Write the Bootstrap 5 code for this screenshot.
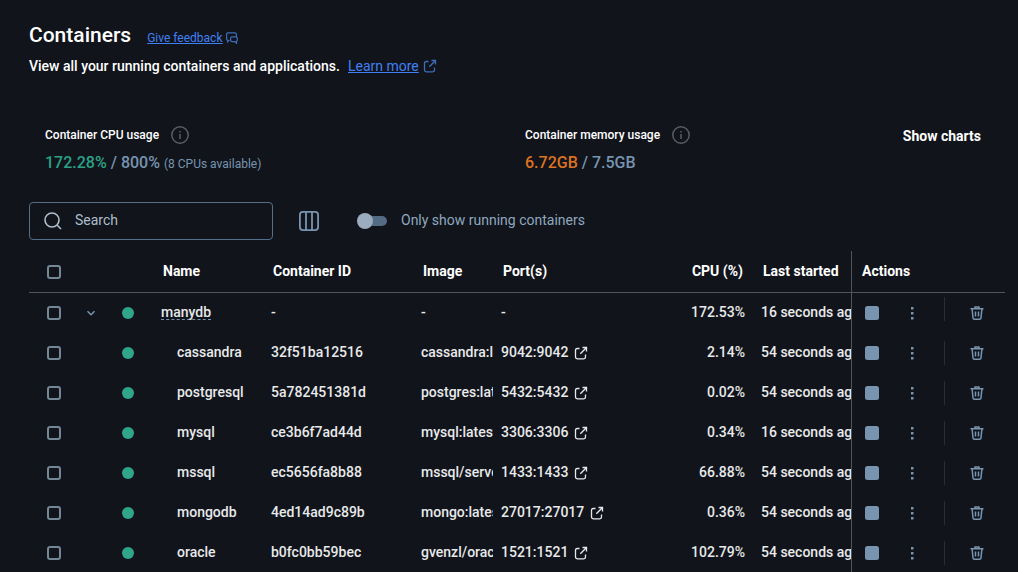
<!DOCTYPE html>
<html lang="en" data-bs-theme="dark">
<head>
<meta charset="utf-8">
<meta name="viewport" content="width=device-width, initial-scale=1">
<title>Containers</title>
<link href="https://cdn.jsdelivr.net/npm/bootstrap@5.3.0/dist/css/bootstrap.min.css" rel="stylesheet">
<style>
  :root { --page: #11141b; --steel: #7794b0; --line: #515557; --link: #4080f5; --green: #2aa287; }
  body { background: var(--page); color: #fff; font: 400 14px/20px Roboto, sans-serif; }
  svg { display: block; fill: none; stroke: currentColor; flex: none; }
  .page-body { padding: 23px 13px 0 29px; }
  .page-title { font-size: 21px; line-height: 24px; font-weight: 500; }
  .link-blue { color: var(--link); font-weight: 400; }
  .link-blue svg { color: #3e6db8; }
  .feedback { padding-top: 6px; }
  .intro { margin-top: 9px; font-weight: 500; }
  .fs-small { font-size: 12px; line-height: 16px; }
  .fs-stat { font-size: 16px; line-height: 24px; font-weight: 500; }
  .stats { margin-top: 50px; padding-left: 16px; }
  .info { color: #5a5d60; }
  .steel { color: var(--steel); }
  .usage-ok { color: var(--green); }
  .usage-high { color: #dd7320; }
  .stat-label { font-weight: 500; gap: 12px; }
  .stat-value { margin-top: 7px; }
  .show-charts { color: #fff; font-size: 14px; line-height: 20px; font-weight: 700; padding: 0 24px; }
  .toolbar { margin-top: 27px; }
  .search-box { width: 244px; height: 38px; border: 1px solid #556e87; border-radius: 4px; padding: 0 14px; color: #adbecb; }
  .search-box input, .search-box input:focus { background: none; border: 0; box-shadow: none; color: inherit; font-size: 14px; line-height: 20px; padding: 0 0 2px 13px; }
  .search-box input::placeholder { color: #adbecb; opacity: 1; }
  .btn-columns { margin-left: 24px; }
  .running { margin-left: 36px; gap: 14px; color: #8fa8bf; }
  .running label { padding-bottom: 2px; }
  .toggle { appearance: none; width: 30px; height: 16px; display: grid; align-items: center; }
  .toggle::before, .toggle::after { content: ""; grid-area: 1 / 1; }
  .toggle::before { height: 10px; margin-left: 4px; border-radius: 5px; background: #546b84; }
  .toggle::after { width: 16px; height: 16px; border-radius: 50%; background: #9bacbf; }
  .grid { table-layout: fixed; width: 100%; margin-top: 11px; border-collapse: separate; border-spacing: 0; }
  .grid th { height: 42px; padding: 0 0 2px 10px; font-weight: 700; border-bottom: 1px solid var(--line); white-space: nowrap; }
  .grid td { height: 40px; padding: 0 0 2px 8px; font-weight: 500; color: #e8e9ea; overflow: hidden; white-space: nowrap; }
  .grid .cpu { text-align: right; padding-right: 8px; }
  .grid th.cpu { padding-right: 10px; }
  .grid .pick { padding: 0 0 0 18px; }
  .grid .icon-cell { padding: 0; }
  .grid .actions { border-left: 1px solid var(--line); }
  .grid td.actions { padding: 0; }
  .w-pick { width: 50px; } .w-expand { width: 24px; } .w-status { width: 50px; } .w-name { width: 110px; }
  .w-id { width: 150px; } .w-image { width: 80px; } .w-cpu { width: 140px; } .w-started { width: 98px; } .w-actions { width: 154px; }
  .tick { appearance: none; display: block; width: 14px; height: 14px; margin: 0; border: 2px solid #748797; border-radius: 3px; }
  .tick:checked { background: #748797; }
  .dot { width: 12px; height: 12px; border-radius: 50%; background: #2fa58a; }
  .app-name { color: inherit; text-decoration: none; border-bottom: 1px dashed #7794b0; display: inline-block; line-height: 14px; }
  .child-name { padding-left: 16px; }
  .port { gap: 6px; }
  .port a { padding-top: 2px; }
  .action-bar { height: 32px; padding: 0 21px 0 12px; }
  .btn-icon { border: 0; padding: 0; background: none; color: var(--steel); }
  .btn-more { margin-left: 24px; }
  .divider { width: 1px; height: 24px; margin-left: 24px; background: #2a2d33; }
  .app-row .divider { align-self: flex-start; }
</style>
</head>
<body>
<svg width="0" height="0" class="position-absolute" aria-hidden="true">
  <symbol id="external" viewBox="0 0 14 14"><path d="M5.500 2.500H3.300Q1.500 2.500 1.500 4.300v6.700q0 1.800 1.800 1.800H9.700q1.800 0 1.800-1.800V8.500M8.500 1.500h4v4M12.300 1.700 6.300 7.700" stroke-width="1.300"/></symbol>
  <symbol id="info" viewBox="0 0 18 18"><circle cx="9" cy="9" r="8.2" stroke-width="1.5"/><path d="M9 8v5M9 5v1.6" stroke-width="1.5"/></symbol>
  <symbol id="trash" viewBox="0 0 14 14"><path d="M.5 2.7h13M5 2.4V.9h4v1.5M2.1 3l.9 8.8q.2 1.4 1.4 1.4h5.2q1.2 0 1.4-1.4l.9-8.8M5.5 5.5v5M8.5 5.5v5" stroke-width="1.5"/></symbol>
  <symbol id="more" viewBox="0 0 16 16"><path d="M7 2h2.500v2.500H7zM7 7h2.500v2.500H7zM7 12h2.500v2.500H7z" fill="currentColor" stroke="none"/></symbol>
</svg>
<main class="page-body vh-100 overflow-hidden">
  <header>
    <div class="d-flex align-items-center gap-3">
      <h1 class="page-title mb-0">Containers</h1>
      <a href="#" class="feedback link-blue fs-small d-flex align-items-center gap-1 text-decoration-none"><span class="text-decoration-underline">Give feedback</span>
        <svg width="12" height="12" viewBox="0 0 12 12" stroke-width="1.2"><path d="M3.600 8.400H3L1.700 9.800V8.400Q.6 8 .6 7V2.400Q.6.8 2.200.8h6.600q1.600 0 1.600 1.600v2M6 4.800h3.800q1.500 0 1.500 1.500V8q0 1-.8 1.400v1.800L8.800 9.600H6.200Q4.600 9.600 4.600 8V6.200Q4.600 4.800 6 4.800Z"/></svg></a>
    </div>
    <p class="intro mb-0 d-flex align-items-center gap-2"><span>View all your running containers and applications.</span>
      <a href="#" class="link-blue d-flex align-items-center gap-1 text-decoration-none"><span class="text-decoration-underline">Learn more</span><svg width="14" height="14"><use href="#external"/></svg></a></p>
  </header>

  <section class="stats row g-0">
    <div class="col-6">
      <div class="stat-label d-flex align-items-center fs-small">Container CPU usage <svg class="info" width="18" height="18"><use href="#info"/></svg></div>
      <div class="stat-value fs-stat steel"><span class="usage-ok">172.28%</span> / 800% <span class="fs-small fw-normal">(8 CPUs available)</span></div>
    </div>
    <div class="col-6 d-flex justify-content-between align-items-start">
      <div>
        <div class="stat-label d-flex align-items-center fs-small">Container memory usage <svg class="info" width="18" height="18"><use href="#info"/></svg></div>
        <div class="stat-value fs-stat steel"><span class="usage-high">6.72GB</span> / 7.5GB</div>
      </div>
      <button type="button" class="btn border-0 show-charts">Show charts</button>
    </div>
  </section>

  <section class="toolbar d-flex align-items-center">
    <div class="search-box d-flex align-items-center">
      <svg width="18" height="18" viewBox="0 0 18 18" stroke-width="1.6" aria-hidden="true"><circle cx="8" cy="8" r="7"/><path d="m13 13 4 4"/></svg>
      <input type="text" class="form-control" placeholder="Search" aria-label="Search">
    </div>
    <button type="button" class="btn-icon btn-columns px-0" aria-label="Choose columns"><svg width="24" height="24" viewBox="0 0 24 24" stroke-width="1.8"><rect x="2.900" y="2.900" width="18.200" height="18.200" rx="3"/><path d="M9 3v18M15 3v18"/></svg></button>
    <div class="running d-flex align-items-center"><input class="toggle" type="checkbox" role="switch" id="running"><label for="running">Only show running containers</label></div>
  </section>

  <table class="grid">
    <colgroup><col class="w-pick"><col class="w-expand"><col class="w-status"><col class="w-name"><col class="w-id"><col class="w-image"><col><col class="w-cpu"><col class="w-started"><col class="w-actions"></colgroup>
    <thead>
      <tr><th class="pick"><input type="checkbox" class="tick" aria-label="Select all"></th><th></th><th></th><th>Name</th><th>Container ID</th><th>Image</th><th>Port(s)</th><th class="cpu">CPU (%)</th><th>Last started</th><th class="actions">Actions</th></tr>
    </thead>
    <tbody id="rows"></tbody>
  </table>
</main>
<script src="https://cdn.jsdelivr.net/npm/bootstrap@5.3.0/dist/js/bootstrap.bundle.min.js"></script>
<script>
  const containers = [
    ['manydb', '-', '-', '-', '172.53%', '16 seconds ago'],
    ['cassandra', '32f51ba12516', 'cassandra:latest', '9042:9042', '2.14%', '54 seconds ago'],
    ['postgresql', '5a782451381d', 'postgres:latest', '5432:5432', '0.02%', '54 seconds ago'],
    ['mysql', 'ce3b6f7ad44d', 'mysql:latest', '3306:3306', '0.34%', '16 seconds ago'],
    ['mssql', 'ec5656fa8b88', 'mssql/server', '1433:1433', '66.88%', '54 seconds ago'],
    ['mongodb', '4ed14ad9c89b', 'mongo:latest', '27017:27017', '0.36%', '54 seconds ago'],
    ['oracle', 'b0fc0bb59bec', 'gvenzl/oracle-xe', '1521:1521', '102.79%', '54 seconds ago']
  ];
  document.getElementById('rows').innerHTML = containers.map(([name, id, image, port, cpu, started], i) => `
    <tr class="${i ? '' : 'app-row'}">
      <td class="pick"><input type="checkbox" class="tick" aria-label="Select ${name}"></td>
      <td class="icon-cell">${i ? '' : '<button type="button" class="btn-icon d-block mx-auto" aria-label="Collapse"><svg width="10" height="10" viewBox="0 0 10 10" stroke-width="1.500"><path d="m1.500 3.200 3.500 3.500 3.500-3.500"/></svg></button>'}</td>
      <td class="icon-cell"><div class="dot mx-auto"></div></td>
      <td>${i ? `<span class="child-name">${name}</span>` : `<a href="#" class="app-name">${name}</a>`}</td>
      <td>${id}</td><td>${image}</td>
      <td>${i ? `<div class="port d-flex align-items-center">${port}<a href="#" class="text-reset" aria-label="Open ${port}"><svg width="14" height="14"><use href="#external"/></svg></a></div>` : port}</td>
      <td class="cpu">${cpu}</td><td>${started}</td>
      <td class="actions"><div class="action-bar d-flex align-items-center">
        <button type="button" class="btn-icon" aria-label="Stop"><svg width="16" height="16" viewBox="0 0 16 16"><rect x="1" y="1" width="14" height="14" rx="2.500" fill="currentColor" stroke="none"/></svg></button>
        <button type="button" class="btn-icon btn-more" aria-label="More"><svg width="16" height="16"><use href="#more"/></svg></button>
        <span class="divider"></span>
        <button type="button" class="btn-icon ms-auto" aria-label="Delete"><svg width="14" height="14"><use href="#trash"/></svg></button>
      </div></td>
    </tr>`).join('');
</script>
</body>
</html>
